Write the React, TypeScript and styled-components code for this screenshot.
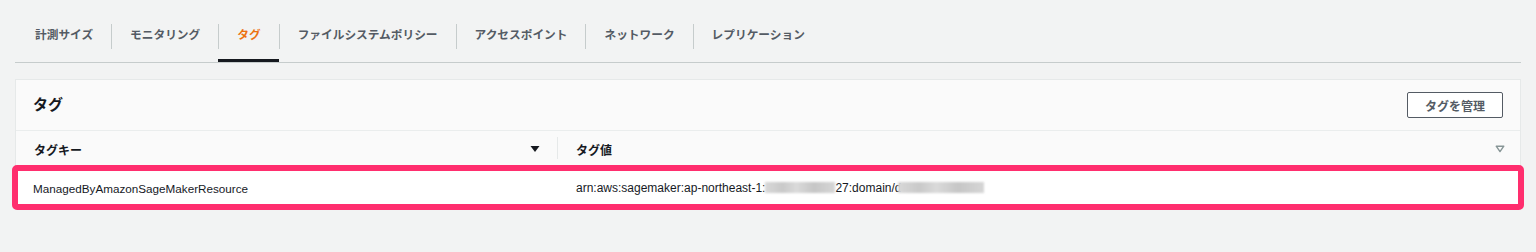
import React, { useState } from "react";
import styled, { createGlobalStyle } from "styled-components";

const GlobalStyle = createGlobalStyle`
  body {
    margin: 0;
    background: #f2f3f3;
    font-family: "Liberation Sans", "Noto Sans CJK JP", sans-serif;
    color: #16191f;
  }
`;

const tabs = [
  "計測サイズ",
  "モニタリング",
  "タグ",
  "ファイルシステムポリシー",
  "アクセスポイント",
  "ネットワーク",
  "レプリケーション",
];

const Page = styled.div`
  padding: 24px 15px 0 15px;
  height: 252px;
  box-sizing: border-box;
`;

const TabBar = styled.div`
  display: flex;
  border-bottom: 1px solid #c6cccc;
`;

const Tab = styled.button<{ $active: boolean }>`
  display: flex;
  flex-direction: column;
  background: none;
  border: none;
  padding: 0 0 10px 0;
  margin: 0;
  cursor: pointer;
  border-bottom: 3px solid ${(p) => (p.$active ? "#16191f" : "transparent")};
  font-family: inherit;
`;

const TabLabel = styled.span<{ $active: boolean; $first: boolean }>`
  height: 25px;
  line-height: 22px;
  padding: 0 18px 0 ${(p) => (p.$first ? "20px" : "18px")};
  border-left: ${(p) => (p.$first ? "none" : "1px solid #c6cccc")};
  font-size: 11.7px;
  font-weight: 700;
  color: ${(p) => (p.$active ? "#ec7211" : "#545b64")};
  white-space: nowrap;
`;

const Panel = styled.div`
  margin-top: 16px;
  background: #fafafa;
  border: 1px solid #e6e9e9;
  border-bottom: none;
`;

const PanelHeader = styled.div`
  display: flex;
  align-items: center;
  justify-content: space-between;
  height: 50px;
  padding: 0 17px;
  border-bottom: 1px solid #eaeded;
`;

const Title = styled.h2`
  margin: 0 0 3px 0;
  font-size: 15px;
  font-weight: 700;
  color: #16191f;
`;

const OutlineButton = styled.button`
  height: 26px;
  padding: 0 17px;
  background: #ffffff;
  border: 1px solid #545b64;
  border-radius: 2px;
  font-family: inherit;
  font-size: 12px;
  font-weight: 700;
  color: #545b64;
  cursor: pointer;
`;

const HeadRow = styled.div`
  display: grid;
  grid-template-columns: 541px 1fr;
  height: 34px;
  align-items: center;
`;

const HeadCell = styled.div<{ $divider?: boolean }>`
  display: flex;
  align-items: center;
  justify-content: space-between;
  height: 20px;
  padding: 2px ${(p) => (p.$divider ? "15px" : "17px")} 0 18px;
  border-left: ${(p) => (p.$divider ? "1px solid #e6e9e9" : "none")};
  font-size: 12px;
  font-weight: 700;
  color: #16191f;
`;

const HighlightRow = styled.div`
  display: grid;
  grid-template-columns: 538px 1fr;
  align-items: center;
  height: 33px;
  margin: 0 -4px 0 -4px;
  background: #ffffff;
  border: 6px solid #ff2e6e;
  border-radius: 5px;
  font-size: 12px;
  color: #16191f;
`;

const Cell = styled.div<{ $pad: number; $size?: number }>`
  padding: 1px 0 0 ${(p) => p.$pad}px;
  font-size: ${(p) => p.$size ?? 12}px;
  white-space: nowrap;
`;

const Redacted = styled.span<{ $w: number; $shift?: number }>`
  display: inline-block;
  width: ${(p) => p.$w}px;
  height: 11px;
  margin-left: ${(p) => p.$shift ?? 0}px;
  vertical-align: -1px;
  background: linear-gradient(
    90deg,
    #d8d8d8 0%,
    #c9c9c9 25%,
    #dadada 45%,
    #c6c6c6 70%,
    #d6d6d6 100%
  );
  filter: blur(1.2px);
`;

const SortDown = () => (
  <svg width="10" height="8" viewBox="0 0 10 8">
    <path d="M0.5 1 L9.5 1 L5 7 Z" fill="#16191f" />
  </svg>
);

const SortNone = () => (
  <svg width="10" height="8" viewBox="0 0 10 8">
    <path
      d="M1.2 1.2 L8.8 1.2 L5 6.6 Z"
      fill="none"
      stroke="#879596"
      strokeWidth="1.4"
      strokeLinejoin="round"
    />
  </svg>
);

export default function App() {
  const [active, setActive] = useState(2);

  return (
    <>
      <GlobalStyle />
      <Page>
        <TabBar>
          {tabs.map((t, i) => (
            <Tab key={t} $active={i === active} onClick={() => setActive(i)}>
              <TabLabel $active={i === active} $first={i === 0}>
                {t}
              </TabLabel>
            </Tab>
          ))}
        </TabBar>

        <Panel>
          <PanelHeader>
            <Title>タグ</Title>
            <OutlineButton>タグを管理</OutlineButton>
          </PanelHeader>
          <HeadRow>
            <HeadCell>
              <span>タグキー</span>
              <SortDown />
            </HeadCell>
            <HeadCell $divider>
              <span>タグ値</span>
              <SortNone />
            </HeadCell>
          </HeadRow>
          <HighlightRow>
            <Cell $pad={15} $size={11.7}>
              ManagedByAmazonSageMakerResource
            </Cell>
            <Cell $pad={20}>
              arn:aws:sagemaker:ap-northeast-1:
              <Redacted $w={70} />
              27:domain/d
              <Redacted $w={86} $shift={-3} />
            </Cell>
          </HighlightRow>
        </Panel>
      </Page>
    </>
  );
}
